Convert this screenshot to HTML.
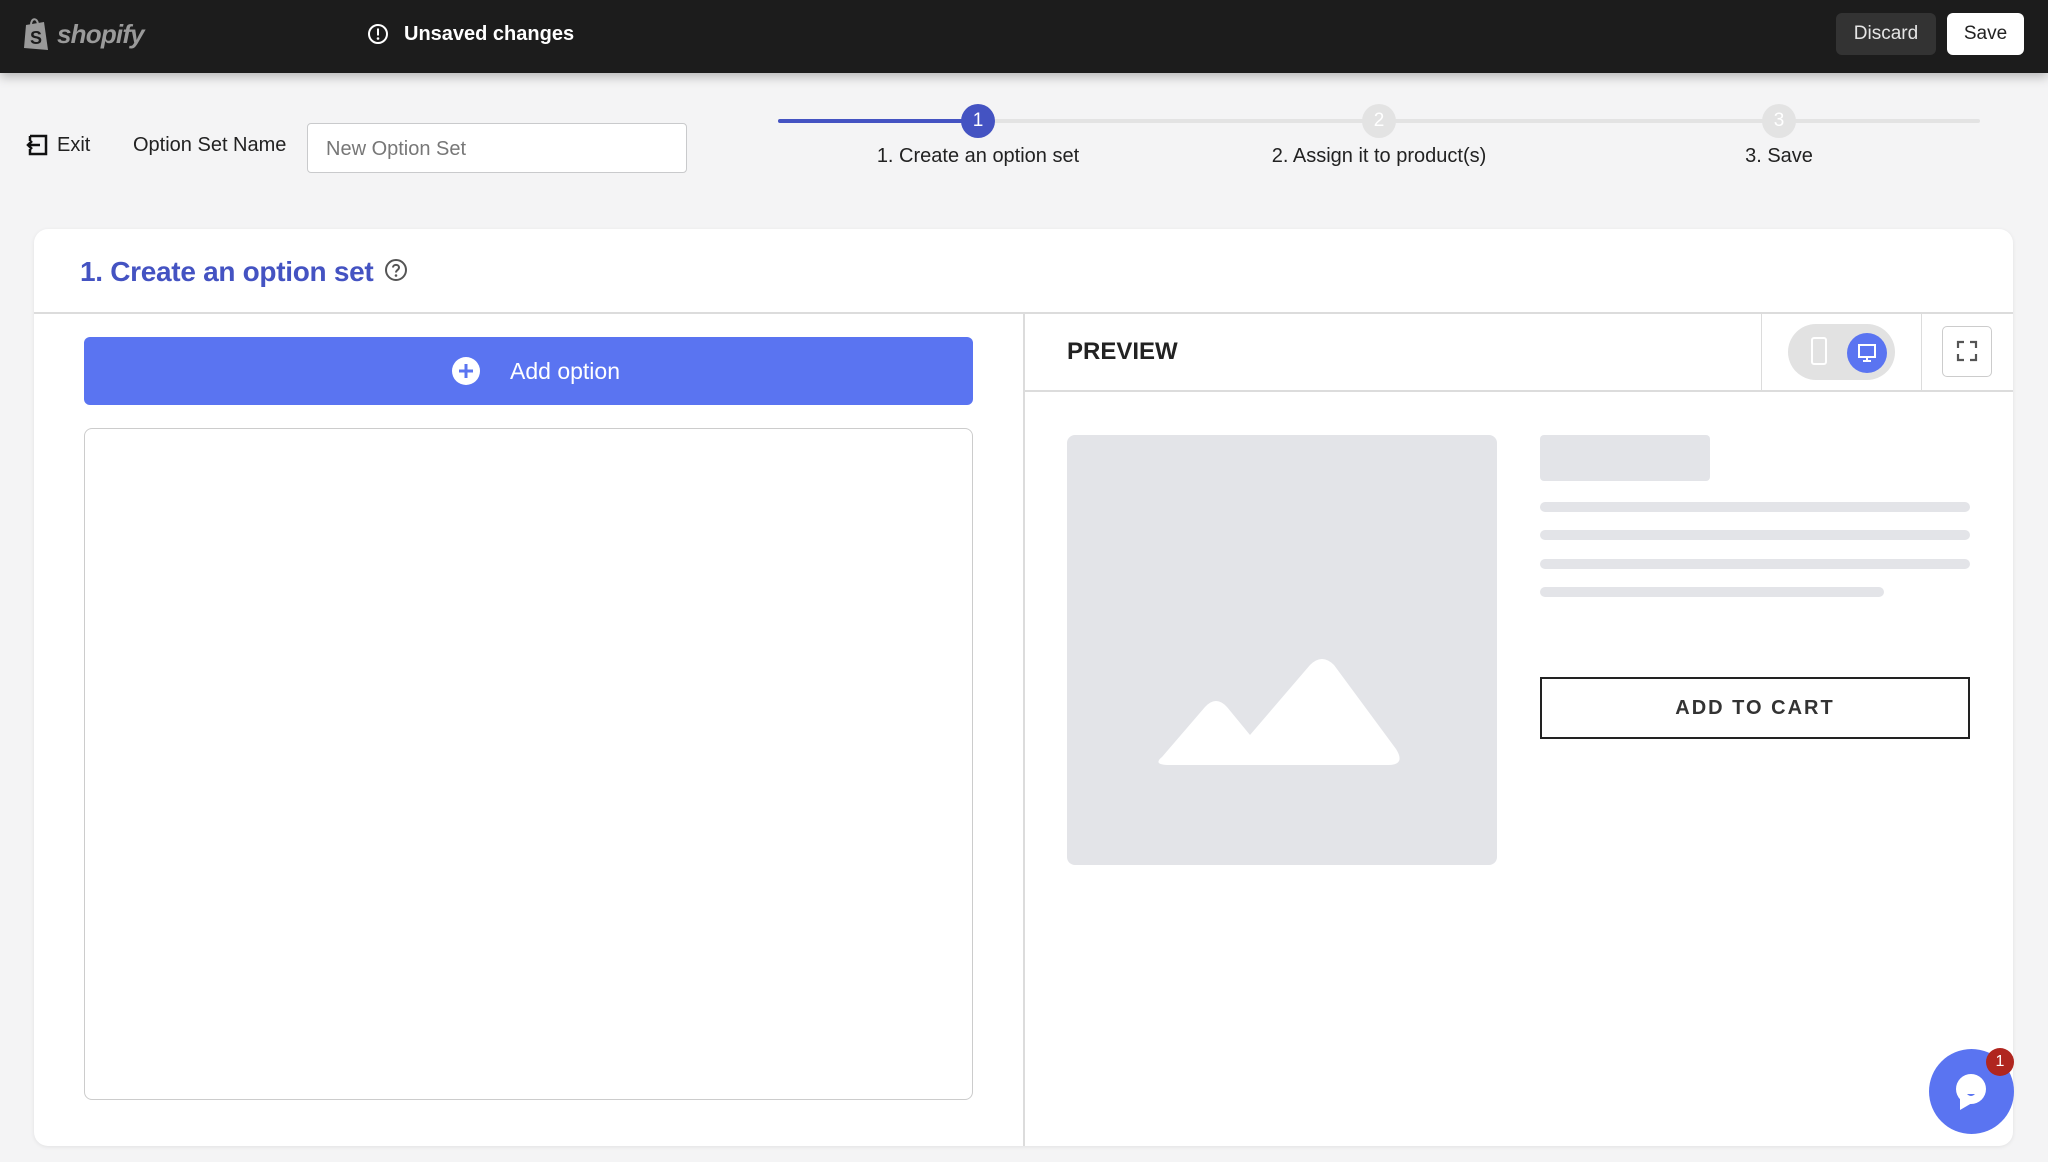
<!DOCTYPE html>
<html><head><meta charset="utf-8"><style>
*{box-sizing:border-box;margin:0;padding:0}
body{width:2048px;height:1162px;background:#f4f4f5;font-family:"Liberation Sans",sans-serif;position:relative;overflow:hidden;color:#222}
.abs{position:absolute}
.top{left:0;top:0;width:2048px;height:73px;background:#1c1c1c;box-shadow:0 4px 10px rgba(0,0,0,.25)}
</style></head><body>
<div class="abs top">
  <svg class="abs" style="left:22px;top:16px" width="32" height="36" viewBox="0 0 32 36"><path d="M4 9 L22 6 L26 34 L2 32 Z" fill="#9a9a9a"/><path d="M9 9 C9 2 15 1 16 8" stroke="#9a9a9a" stroke-width="2" fill="none"/><text x="8" y="28" font-size="18" font-weight="bold" fill="#1c1c1c" font-family="Liberation Sans">S</text></svg>
  <div class="abs" style="left:57px;top:19px;color:#9a9a9a;font-size:26px;font-weight:bold;font-style:italic;letter-spacing:-0.8px">shopify</div>
  <svg class="abs" style="left:367px;top:23px" width="22" height="22" viewBox="0 0 22 22"><circle cx="11" cy="11" r="9" stroke="#fff" stroke-width="2" fill="none"/><rect x="10" y="5.5" width="2" height="7" fill="#fff"/><circle cx="11" cy="15.5" r="1.3" fill="#fff"/></svg>
  <div class="abs" style="left:404px;top:23px;color:#fff;font-size:20px;font-weight:bold">Unsaved changes</div>
  <div class="abs" style="left:1836px;top:13px;width:100px;height:42px;background:#333;border-radius:6px;color:#e5e5e5;font-size:19px;text-align:center;line-height:42px">Discard</div>
  <div class="abs" style="left:1947px;top:13px;width:77px;height:42px;background:#fff;border-radius:6px;color:#222;font-size:19px;text-align:center;line-height:42px">Save</div>
</div>
<svg class="abs" style="left:25px;top:133px" width="24" height="24" viewBox="0 0 24 24"><path d="M5 3 H21 V21 H5 V16 M5 8 V3" stroke="#111" stroke-width="2.5" fill="none"/><path d="M15 12 H3 M7 8 L3 12 L7 16" stroke="#111" stroke-width="2.5" fill="none"/></svg>
<div class="abs" style="left:57px;top:134px;font-size:20px">Exit</div>
<div class="abs" style="left:133px;top:134px;font-size:20px">Option Set Name</div>
<div class="abs" style="left:307px;top:123px;width:380px;height:50px;border:1.5px solid #c9cacc;border-radius:4px;background:#fff;font-size:20px;color:#777;padding:14px 18px">New Option Set</div>
<div class="abs" style="left:778px;top:119px;width:1202px;height:4px;background:#e3e3e3;border-radius:2px"></div>
<div class="abs" style="left:778px;top:119px;width:200px;height:4px;background:#4453c2;border-radius:2px"></div>
<div class="abs" style="left:961px;top:104px;width:34px;height:34px;border-radius:50%;background:#4453c2;color:#fff;font-size:19px;text-align:center;line-height:34px">1</div>
<div class="abs" style="left:1362px;top:104px;width:34px;height:34px;border-radius:50%;background:#e3e3e3;color:#fff;font-size:19px;text-align:center;line-height:34px">2</div>
<div class="abs" style="left:1762px;top:104px;width:34px;height:34px;border-radius:50%;background:#e3e3e3;color:#fff;font-size:19px;text-align:center;line-height:34px">3</div>
<div class="abs" style="left:828px;top:145px;width:300px;text-align:center;font-size:20px">1. Create an option set</div>
<div class="abs" style="left:1229px;top:145px;width:300px;text-align:center;font-size:20px">2. Assign it to product(s)</div>
<div class="abs" style="left:1629px;top:145px;width:300px;text-align:center;font-size:20px">3. Save</div>

<div class="abs" style="left:34px;top:229px;width:1979px;height:917px;background:#fff;border-radius:14px;box-shadow:0 1px 4px rgba(0,0,0,.08);overflow:hidden">
  <div class="abs" style="left:46px;top:27px;font-size:28px;font-weight:bold;color:#4453c2;letter-spacing:-0.3px">1. Create an option set</div>
  <svg class="abs" style="left:350px;top:29px" width="24" height="24" viewBox="0 0 24 24"><circle cx="12" cy="12" r="10" stroke="#555" stroke-width="2" fill="none"/><path d="M9 9.5 C9 6 15 6 15 9.5 C15 12 12 12 12 14.5" stroke="#555" stroke-width="2" fill="none"/><circle cx="12" cy="17.5" r="1.3" fill="#555"/></svg>
  <div class="abs" style="left:0;top:83px;width:1979px;height:2px;background:#dcdcdc"></div>
  <div class="abs" style="left:989px;top:84px;width:2px;height:840px;background:#dcdcdc"></div>
  <div class="abs" style="left:50px;top:108px;width:889px;height:68px;background:#5a74f1;border-radius:6px"></div>
  <svg class="abs" style="left:418px;top:128px" width="28" height="28" viewBox="0 0 28 28"><circle cx="14" cy="14" r="14" fill="#fff"/><path d="M14 7 V21 M7 14 H21" stroke="#5a74f1" stroke-width="3"/></svg>
  <div class="abs" style="left:476px;top:129px;font-size:23px;color:#fff">Add option</div>
  <div class="abs" style="left:50px;top:199px;width:889px;height:672px;border:1.5px solid #ccc;border-radius:8px"></div>
  <div class="abs" style="left:990px;top:161px;width:989px;height:2px;background:#dcdcdc"></div>
  <div class="abs" style="left:1033px;top:109px;font-size:24px;font-weight:bold;color:#222">PREVIEW</div>
  <div class="abs" style="left:1727px;top:84px;width:1px;height:78px;background:#dcdcdc"></div>
  <div class="abs" style="left:1887px;top:84px;width:1px;height:78px;background:#dcdcdc"></div>
  <div class="abs" style="left:1754px;top:95px;width:107px;height:56px;background:#e2e2e2;border-radius:28px"></div>
  <div class="abs" style="left:1777px;top:108px;width:16px;height:28px;border:2px solid #fff;border-radius:3px"></div>
  <div class="abs" style="left:1813px;top:104px;width:40px;height:40px;background:#5a74f1;border-radius:50%"></div>
  <svg class="abs" style="left:1822px;top:113px" width="22" height="22" viewBox="0 0 22 22"><rect x="3" y="3" width="16" height="12" stroke="#fff" stroke-width="2" fill="none"/><path d="M11 15 V19 M7 19 H15" stroke="#fff" stroke-width="2"/></svg>
  <div class="abs" style="left:1908px;top:97px;width:50px;height:51px;border:1.5px solid #ccc;border-radius:5px"></div>
  <svg class="abs" style="left:1922px;top:111px" width="22" height="22" viewBox="0 0 22 22"><path d="M2 8 V2 H8 M14 2 H20 V8 M20 14 V20 H14 M8 20 H2 V14" stroke="#555" stroke-width="2.2" fill="none"/></svg>
  <div class="abs" style="left:1033px;top:206px;width:430px;height:430px;background:#e3e4e8;border-radius:8px"></div>
  <svg class="abs" style="left:1116px;top:420px" width="260" height="130" viewBox="0 0 260 130"><path d="M12 108 L55 58 Q66 46 77 58 L100 86 L160 16 Q172 4 184 16 L246 100 Q256 116 238 116 L20 116 Q2 116 12 108 Z" fill="#fff"/></svg>
  <div class="abs" style="left:1506px;top:206px;width:170px;height:46px;background:#e3e4e8;border-radius:4px"></div>
  <div class="abs" style="left:1506px;top:273px;width:430px;height:10px;background:#e3e4e8;border-radius:5px"></div>
  <div class="abs" style="left:1506px;top:301px;width:430px;height:10px;background:#e3e4e8;border-radius:5px"></div>
  <div class="abs" style="left:1506px;top:330px;width:430px;height:10px;background:#e3e4e8;border-radius:5px"></div>
  <div class="abs" style="left:1506px;top:358px;width:344px;height:10px;background:#e3e4e8;border-radius:5px"></div>
  <div class="abs" style="left:1506px;top:448px;width:430px;height:62px;border:2px solid #222;text-align:center;line-height:58px;font-size:20px;font-weight:bold;letter-spacing:2px;color:#333">ADD TO CART</div>
</div>
<div class="abs" style="left:1929px;top:1049px;width:85px;height:85px;border-radius:50%;background:#5a74f1"></div>
<svg class="abs" style="left:1948px;top:1068px" width="46" height="46" viewBox="0 0 46 46"><circle cx="23" cy="21" r="15" fill="#fff"/><path d="M12 30 L12 42 L24 35 Z" fill="#fff"/><path d="M19 26 Q23 30 27 26 Z" fill="#5a74f1"/></svg>
<div class="abs" style="left:1986px;top:1048px;width:28px;height:28px;border-radius:50%;background:#b0261f;color:#fff;font-size:16px;text-align:center;line-height:28px">1</div>
</body></html>
